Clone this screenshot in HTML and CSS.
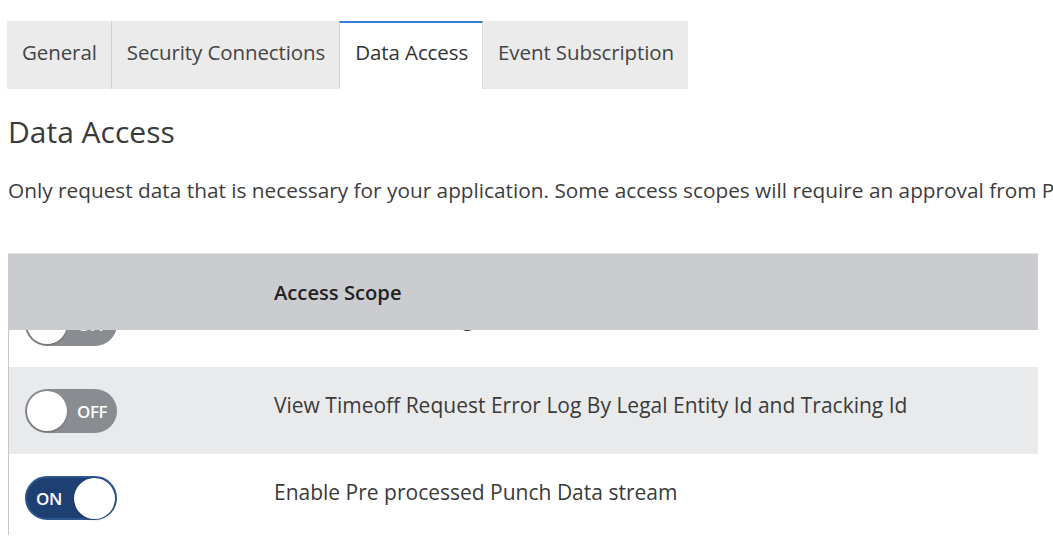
FILE: index.html
```html
<!DOCTYPE html>
<html lang="en">
<head>
    <meta charset="UTF-8">
    <meta name="viewport" content="width=device-width, initial-scale=1.0">
    <title>Data Access</title>
    <link rel="stylesheet" href="styles.css">
</head>
<body>

<div class="page">
    <!-- Tabs -->
    <div class="tabs">
        <div class="tab">General</div>
        <div class="tab">Security Connections</div>
        <div class="tab active">Data Access</div>
        <div class="tab">Event Subscription</div>
    </div>

    <h2>Data Access</h2>
    <p class="intro">Only request data that is necessary for your application. Some access scopes will require an approval from Paycor.</p>

    <!-- Scope table -->
    <div class="scope-table">
        <div class="scope-head">
            <div></div>
            <div>Access Scope</div>
        </div>
        <div class="scope-body">
            <div class="scope-row first">
                <div><span class="toggle off"><span class="label">OFF</span><span class="knob"></span></span></div>
                <div class="scope-name">View Timeoff Settings</div>
            </div>
            <div class="scope-row alt">
                <div><span class="toggle off"><span class="label">OFF</span><span class="knob"></span></span></div>
                <div class="scope-name">View Timeoff Request Error Log By Legal Entity Id and Tracking Id</div>
            </div>
            <div class="scope-row">
                <div><span class="toggle on"><span class="label">ON</span><span class="knob"></span></span></div>
                <div class="scope-name">Enable Pre processed Punch Data stream</div>
            </div>
        </div>
    </div>
</div>

</body>
</html>
```

FILE: styles.css
```css
/* General Styling */
* {
    box-sizing: border-box;
    margin: 0;
    padding: 0;
    font-family: "Open Sans", "Noto Sans", sans-serif;
}

body {
    background: white;
    color: #333;
    overflow: hidden;
}

.page {
    padding: 21px 15px 0 8px;
}

/* Tabs */
.tabs {
    display: flex;
    margin-left: -1px;
}

.tab {
    height: 68px;
    padding: 0 14px 6px 15px;
    display: flex;
    align-items: center;
    background: #ebebec;
    color: #444;
    font-size: 20.5px;
    letter-spacing: -0.1px;
    border-left: 1px solid #cfcfd1;
}

.tab:first-child {
    border-left: none;
}

.tab.active {
    background: white;
    color: #333;
    border-top: 2px solid #3a7bd5;
    border-right: 1px solid #dcdcdc;
    padding-bottom: 8px;
}

.tab.active + .tab {
    border-left: none;
}

h2 {
    font-size: 30px;
    font-weight: normal;
    color: #3a3a3a;
    margin-top: 25px;
    line-height: 36px;
}

.intro {
    font-size: 20.8px;
    line-height: 28px;
    color: #3d3d3d;
    white-space: nowrap;
    margin-top: 26px;
    margin-right: -20px;
    overflow: hidden;
}

/* Table */
.scope-table {
    margin-top: 49px;
    width: 1030px;
}

.scope-head {
    display: grid;
    grid-template-columns: 266px 1fr;
    height: 77px;
    align-items: center;
    background: #cbccd0;
    border-top: 1px solid #e4e4e6;
    font-weight: 600;
    font-size: 20.2px;
    color: #222;
}

.scope-body {
    height: 205px;
    overflow: hidden;
    border-left: 1px solid #c8c8c8;
}

.scope-row {
    display: grid;
    grid-template-columns: 249px 1fr;
    height: 87px;
    align-items: center;
    padding-left: 16px;
    background: white;
}

.scope-row.first {
    margin-top: -50px;
}

.scope-row.alt {
    background: #e9eaec;
}

.scope-name {
    font-size: 21px;
    color: #3a3a3a;
    margin-top: -11px;
    white-space: nowrap;
}

/* Toggle switch */
.toggle {
    display: flex;
    align-items: center;
    width: 92px;
    height: 44px;
    border-radius: 22px;
    padding: 2px;
    margin-top: 1px;
}

.toggle .knob {
    width: 40px;
    height: 40px;
    border-radius: 50%;
    background: white;
    box-shadow: 0 1px 2px rgba(0, 0, 0, 0.25);
}

.toggle .label {
    color: white;
    font-weight: 600;
    font-size: 17px;
    letter-spacing: -0.5px;
}

.toggle.off {
    background: #898c91;
    flex-direction: row-reverse;
    justify-content: space-between;
    padding-right: 10px;
}

.toggle.on {
    background: #1e3f72;
    border: 2px solid #2d5691;
    justify-content: space-between;
    padding: 0 0 0 9px;
}

.toggle.on .knob {
    width: 41px;
    height: 41px;
}
```
